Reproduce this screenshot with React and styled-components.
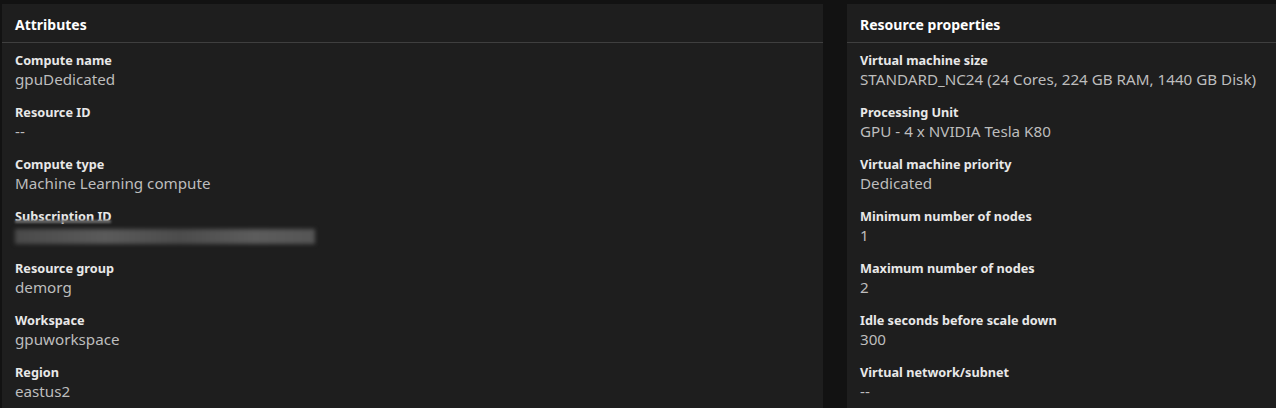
import React from "react";
import styled, { createGlobalStyle } from "styled-components";

const Global = createGlobalStyle`
  html, body {
    margin: 0;
    padding: 0;
    background: #121212;
  }
  body {
    font-family: "Noto Sans", "Open Sans", "Liberation Sans", sans-serif;
  }
`;

const Page = styled.div`
  width: 1276px;
  height: 408px;
  overflow: hidden;
  padding: 4px 0 0 2px;
  box-sizing: border-box;
  display: grid;
  grid-template-columns: 821px 429px;
  column-gap: 24px;
  background: #121212;
`;

const Panel = styled.section`
  background: #1e1e1e;
  height: 100%;
`;

const Header = styled.div`
  height: 39px;
  padding: 3px 13px 0;
  display: flex;
  align-items: center;
  box-sizing: border-box;
  border-bottom: 1px solid #3f3f3f;
  color: #ffffff;
  font-size: 14px;
  font-weight: 700;
`;

const List = styled.div`
  padding: 8px 13px 0;
  display: flex;
  flex-direction: column;
  gap: 13px;
`;

const Field = styled.div`
  display: flex;
  flex-direction: column;
`;

const Label = styled.div`
  color: #e8e8e8;
  font-size: 12.7px;
  font-weight: 700;
  line-height: 18px;
  position: relative;
`;

const Value = styled.div`
  color: #bdbdbd;
  font-size: 15.2px;
  line-height: 21px;
  white-space: nowrap;
`;

const Blurred = styled.div`
  width: 300px;
  height: 15px;
  margin: 4px 0 2px;
  background: linear-gradient(90deg, #4a4a4a 0%, #5a5a5a 30%, #4c4c4c 55%, #5c5c5c 80%, #555 100%);
  filter: blur(2px);
`;

const LabelSmudge = styled.span`
  position: absolute;
  left: 0;
  bottom: 2px;
  width: 96px;
  height: 3px;
  background: #6a6a6a;
  filter: blur(1px);
`;

const attributes = [
  ["Compute name", "gpuDedicated"],
  ["Resource ID", "--"],
  ["Compute type", "Machine Learning compute"],
  ["Subscription ID", null],
  ["Resource group", "demorg"],
  ["Workspace", "gpuworkspace"],
  ["Region", "eastus2"],
];

const properties = [
  ["Virtual machine size", "STANDARD_NC24 (24 Cores, 224 GB RAM, 1440 GB Disk)"],
  ["Processing Unit", "GPU - 4 x NVIDIA Tesla K80"],
  ["Virtual machine priority", "Dedicated"],
  ["Minimum number of nodes", "1"],
  ["Maximum number of nodes", "2"],
  ["Idle seconds before scale down", "300"],
  ["Virtual network/subnet", "--"],
];

function Fields({ items }) {
  return (
    <List>
      {items.map(([label, value]) => (
        <Field key={label}>
          <Label>
            {label}
            {value === null && <LabelSmudge />}
          </Label>
          {value === null ? <Blurred /> : <Value>{value}</Value>}
        </Field>
      ))}
    </List>
  );
}

export default function App() {
  return (
    <>
      <Global />
      <Page>
        <Panel>
          <Header>Attributes</Header>
          <Fields items={attributes} />
        </Panel>
        <Panel>
          <Header>Resource properties</Header>
          <Fields items={properties} />
        </Panel>
      </Page>
    </>
  );
}
